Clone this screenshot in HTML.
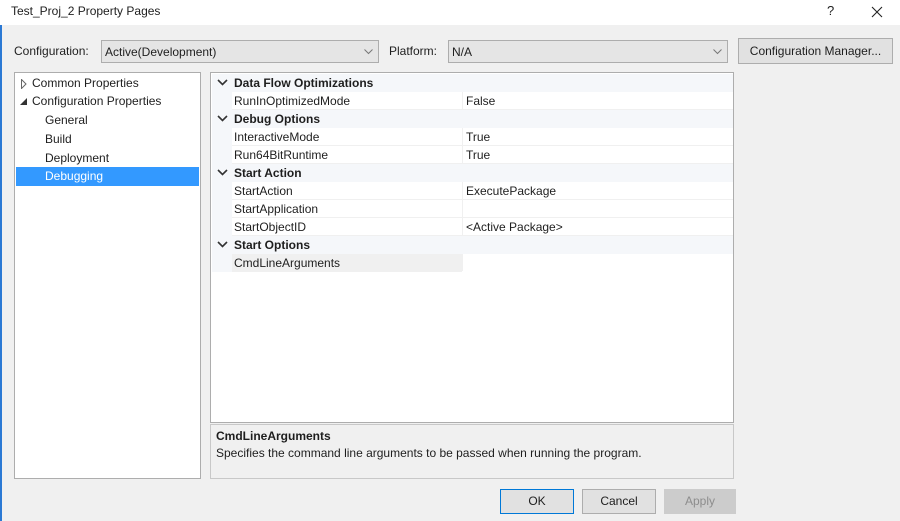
<!DOCTYPE html>
<html><head><style>
body{margin:0;width:900px;height:521px;background:#f0f0f0;font-family:"Liberation Sans",sans-serif;font-size:12px;color:#1e1e1e;position:relative;overflow:hidden}
.a{position:absolute}
.title{left:0;top:0;width:900px;height:25px;background:#fff}
.sel{border:1px solid #adadad;background:#e5e5e5;box-sizing:border-box}
.btn{border:1px solid #adadad;background:#e1e1e1;box-sizing:border-box;text-align:center;line-height:22px}
.row{position:absolute;left:0;width:521px;height:18px;line-height:18px}
.h{background:#f5f7fa;font-weight:bold}
.r{background:#fff}
.r .n{position:absolute;left:22px;top:0}
.r .v{position:absolute;left:250px;top:0;height:17px;border-left:1px solid #f0f0f0;padding-left:3px}
.r{border-bottom:1px solid #f0f0f0;box-sizing:border-box}
.gut{position:absolute;left:0;top:0;width:20px;height:18px;background:#f5f7fa}
.h .t{position:absolute;left:22px}
.chev{position:absolute;left:5px;top:3px}
.ti{position:absolute;height:19px;line-height:19px}
</style></head><body>
<div class="a" style="left:0;top:25px;width:2px;height:496px;background:#2b79d4"></div>
<div class="a title"></div>
<div class="a" style="left:11px;top:4px;font-size:12px">Test_Proj_2 Property Pages</div>
<div class="a" style="left:827px;top:3px;font-size:13px">?</div>
<svg class="a" style="left:871px;top:6px" width="12" height="12"><path d="M1 1L11 11M11 1L1 11" stroke="#222" stroke-width="1.1"/></svg>

<div class="a" style="left:14px;top:44px">Configuration:</div>
<div class="a sel" style="left:101px;top:40px;width:278px;height:23px"><span class="a" style="left:3px;top:4px">Active(Development)</span>
<svg class="a" style="left:262px;top:8px" width="9" height="6"><path d="M0.5 0.5L4.5 4.5L8.5 0.5" stroke="#777" fill="none"/></svg></div>
<div class="a" style="left:389px;top:44px">Platform:</div>
<div class="a sel" style="left:448px;top:40px;width:280px;height:23px"><span class="a" style="left:3px;top:4px">N/A</span>
<svg class="a" style="left:264px;top:8px" width="9" height="6"><path d="M0.5 0.5L4.5 4.5L8.5 0.5" stroke="#777" fill="none"/></svg></div>
<div class="a btn" style="left:738px;top:38px;width:155px;height:26px;line-height:24px">Configuration Manager...</div>

<div class="a" style="left:14px;top:72px;width:187px;height:407px;background:#fff;border:1px solid #adadad;box-sizing:border-box">
<svg class="a" style="left:6px;top:6px" width="6" height="10"><path d="M0.5 0.5L5 5L0.5 9.5Z" stroke="#666" fill="none"/></svg>
<div class="ti" style="left:17px;top:1px">Common Properties</div>
<svg class="a" style="left:5px;top:25px" width="7" height="7"><path d="M0 7L7 7L7 0Z" fill="#333"/></svg>
<div class="ti" style="left:17px;top:19px">Configuration Properties</div>
<div class="ti" style="left:30px;top:38px">General</div>
<div class="ti" style="left:30px;top:57px">Build</div>
<div class="ti" style="left:30px;top:76px">Deployment</div>
<div class="a" style="left:1px;top:94px;width:183px;height:19px;background:#3399ff"></div>
<div class="ti" style="left:30px;top:94px;color:#fff">Debugging</div>
</div>

<div class="a" style="left:210px;top:72px;width:524px;height:351px;background:#fff;border:1px solid #adadad;box-sizing:border-box">
<div style="position:absolute;left:1px;top:1px;width:521px">
<div class="row h" style="top:0"><svg class="chev" width="11" height="10"><path d="M1 3L5.5 7.5L10 3" stroke="#333" stroke-width="1.6" fill="none"/></svg><span class="t">Data Flow Optimizations</span></div>
<div class="row r" style="top:18px"><div class="gut"></div><span class="n">RunInOptimizedMode</span><span class="v">False</span></div>
<div class="row h" style="top:36px"><svg class="chev" width="11" height="10"><path d="M1 3L5.5 7.5L10 3" stroke="#333" stroke-width="1.6" fill="none"/></svg><span class="t">Debug Options</span></div>
<div class="row r" style="top:54px"><div class="gut"></div><span class="n">InteractiveMode</span><span class="v">True</span></div>
<div class="row r" style="top:72px"><div class="gut"></div><span class="n">Run64BitRuntime</span><span class="v">True</span></div>
<div class="row h" style="top:90px"><svg class="chev" width="11" height="10"><path d="M1 3L5.5 7.5L10 3" stroke="#333" stroke-width="1.6" fill="none"/></svg><span class="t">Start Action</span></div>
<div class="row r" style="top:108px"><div class="gut"></div><span class="n">StartAction</span><span class="v">ExecutePackage</span></div>
<div class="row r" style="top:126px"><div class="gut"></div><span class="n">StartApplication</span><span class="v"></span></div>
<div class="row r" style="top:144px"><div class="gut"></div><span class="n">StartObjectID</span><span class="v">&lt;Active Package&gt;</span></div>
<div class="row h" style="top:162px"><svg class="chev" width="11" height="10"><path d="M1 3L5.5 7.5L10 3" stroke="#333" stroke-width="1.6" fill="none"/></svg><span class="t">Start Options</span></div>
<div class="row r" style="top:180px;border-bottom:none"><div class="gut"></div><div class="a" style="left:20px;top:0;width:230px;height:18px;background:#f0f0f0"></div><span class="n">CmdLineArguments</span><span class="v"></span></div>
</div></div>

<div class="a" style="left:210px;top:424px;width:524px;height:55px;border:1px solid #c8c8c8;box-sizing:border-box">
<div class="a" style="left:5px;top:4px;font-weight:bold">CmdLineArguments</div>
<div class="a" style="left:5px;top:21px">Specifies the command line arguments to be passed when running the program.</div>
</div>

<div class="a btn" style="left:500px;top:489px;width:74px;height:25px;border:1px solid #0078d7;background:#e1e1e1">OK</div>
<div class="a btn" style="left:582px;top:489px;width:74px;height:25px">Cancel</div>
<div class="a btn" style="left:664px;top:489px;width:72px;height:25px;background:#cccccc;border-color:#cccccc;color:#8d8d8d">Apply</div>
</body></html>
